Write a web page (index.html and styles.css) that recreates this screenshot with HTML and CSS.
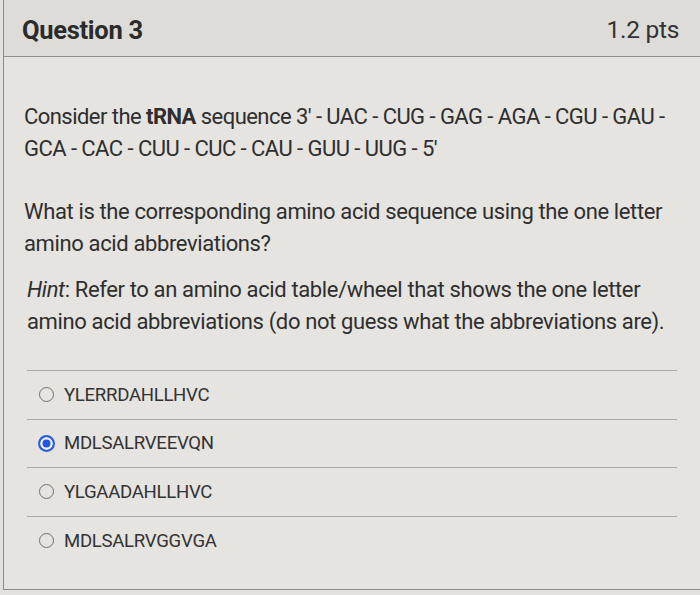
FILE: index.html
```html
<!DOCTYPE html>
<html>
<head>
<meta charset="utf-8">
<link rel="stylesheet" href="styles.css">
</head>
<body>
<div class="card">
  <div class="header">
    <span class="title">Question 3</span>
    <span class="pts">1.2 pts</span>
  </div>
  <div class="content">
    <p class="p1">Consider the <b>tRNA</b> sequence 3' - UAC - CUG - GAG - AGA - CGU - GAU&nbsp;- GCA - CAC - CUU - CUC - CAU - GUU - UUG - 5'</p>
    <p class="p2">What is the corresponding amino acid sequence using the one letter amino acid abbreviations?</p>
    <p class="p3"><i>Hint</i>: Refer to an amino acid table/wheel that shows the one letter amino acid abbreviations (do not guess what the abbreviations are).</p>
    <div class="options">
      <div class="opt"><span class="radio"></span><span class="label">YLERRDAHLLHVC</span></div>
      <div class="opt"><span class="radio on"></span><span class="label">MDLSALRVEEVQN</span></div>
      <div class="opt"><span class="radio"></span><span class="label">YLGAADAHLLHVC</span></div>
      <div class="opt last"><span class="radio"></span><span class="label">MDLSALRVGGVGA</span></div>
    </div>
  </div>
</div>
</body>
</html>
```
FILE: styles.css
```css
html, body {
  margin: 0;
  padding: 0;
  background: #e3e1de;
}
body {
  font-family: Roboto, "Liberation Sans", sans-serif;
  color: #2e2e2e;
  width: 700px;
  height: 595px;
  overflow: hidden;
}
.card {
  margin-left: 3px;
  width: 720px;
  height: 590px;
  border-left: 1px solid #8a8a8a;
  border-bottom: 1px solid #8a8a8a;
  background: #e6e4e1;
  box-sizing: border-box;
}
.header {
  height: 57px;
  box-sizing: border-box;
  background: #dedcd8;
  border-bottom: 1px solid #8f8f8f;
  display: flex;
  align-items: center;
  justify-content: space-between;
  padding: 3px 22px 0 18px;
  width: 697px;
}
.title {
  font-size: 25.5px;
  font-weight: 700;
  color: #2b2b2b;
  letter-spacing: -0.3px;
}
.pts {
  font-size: 24.5px;
  color: #333;
  letter-spacing: -0.3px;
}
.content {
  width: 676px;
  padding: 44px 0 0 20px;
  box-sizing: border-box;
}
.content p {
  margin: 0;
  font-size: 22px;
  line-height: 32px;
  letter-spacing: -0.37px;
}
.p1 { margin-bottom: 31px !important; width: 652px; letter-spacing: -0.55px !important; }
.p2 { margin-bottom: 14px !important; width: 652px; }
.p3 { width: 652px; padding-left: 3px; }
.options {
  margin-top: 32px;
  border-top: 1px solid #aaa9a6;
  width: 650px;
  margin-left: 3px;
}
.opt {
  height: 48.5px;
  box-sizing: border-box;
  border-bottom: 1px solid #aaa9a6;
  display: flex;
  align-items: center;
  padding-left: 12px;
}
.opt.last { border-bottom: none; }
.radio {
  width: 15px;
  height: 15px;
  border: 1.5px solid #6e6e6e;
  border-radius: 50%;
  box-sizing: border-box;
  margin-right: 10px;
  flex: none;
}
.radio.on {
  width: 17px;
  height: 17px;
  border: 2px solid #2b5fd8;
  background: #2457e0;
  box-shadow: inset 0 0 0 2.5px #f0f0f0;
  margin-left: -1px;
  margin-right: 9px;
}
.label {
  font-size: 18.6px;
  letter-spacing: -0.3px;
  color: #333;
}
```
